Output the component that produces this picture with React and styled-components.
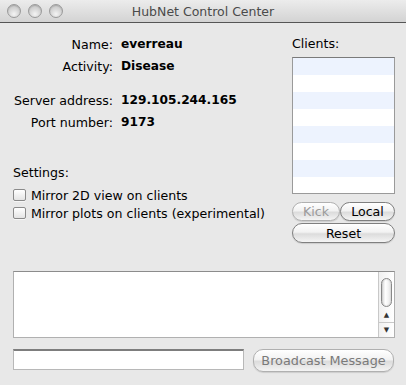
import React from "react";
import styled, { createGlobalStyle } from "styled-components";

const Global = createGlobalStyle`
  html, body { margin: 0; padding: 0; background: #e8e8e8; }
  body { font-family: "DejaVu Sans", "Liberation Sans", sans-serif; font-size: 12.6px; color: #000; }
  * { box-sizing: border-box; }
`;

const Window = styled.div`
  width: 406px;
  height: 385px;
  background: #e8e8e8;
  display: flex;
  flex-direction: column;
  overflow: hidden;
`;

const TitleBar = styled.div`
  height: 23px;
  flex: none;
  display: flex;
  align-items: center;
  position: relative;
  background: linear-gradient(#ececec, #d3d3d3);
  border-bottom: 1px solid #555;
`;

const Lights = styled.div`
  display: flex;
  gap: 7px;
  padding-left: 7px;
`;

const Light = styled.span`
  width: 14px;
  height: 14px;
  border-radius: 50%;
  border: 1px solid #9a9a9a;
  background: radial-gradient(circle at 50% 75%, #f4f4f4 0%, #d8d8d8 45%, #bdbdbd 100%);
  box-shadow: inset 0 1px 1px rgba(0,0,0,0.15);
`;

const Title = styled.div`
  position: absolute;
  left: 0;
  right: 0;
  text-align: center;
  font-size: 12.5px;
  color: #4a4a4a;
  pointer-events: none;
`;

const Body = styled.div`
  padding: 10px 12px 0 13px;
  display: flex;
  flex-direction: column;
`;

const Top = styled.div`
  display: flex;
  justify-content: space-between;
`;

const LeftCol = styled.div`
  display: flex;
  flex-direction: column;
`;

const InfoGrid = styled.div`
  display: grid;
  grid-template-columns: 100px auto;
  grid-template-rows: 22px 22px 12px 22px 22px;
  column-gap: 8px;
  align-items: center;
`;

const Label = styled.div`
  text-align: right;
  white-space: nowrap;
`;

const Value = styled.div`
  font-weight: bold;
  font-size: 12.2px;
  white-space: nowrap;
`;

const Spacer = styled.div`
  grid-column: 1 / 3;
`;

const SectionLabel = styled.div`
  line-height: 18px;
  margin-top: ${p => p.$mt || 0}px;
`;

const CheckList = styled.div`
  margin-top: 4px;
  display: flex;
  flex-direction: column;
`;

const CheckRow = styled.label`
  display: flex;
  align-items: center;
  height: 18px;
  gap: 5px;
  white-space: nowrap;
`;

const Box = styled.span`
  width: 13px;
  height: 12px;
  border: 1px solid #8a8a8a;
  border-radius: 2px;
  background: linear-gradient(#ffffff, #e4e4e4);
  box-shadow: 0 1px 0 rgba(255,255,255,0.6);
`;

const RightCol = styled.div`
  width: 103px;
  display: flex;
  flex-direction: column;
  margin-right: -1px;
`;

const ClientsLabel = styled.div`
  line-height: 22px;
`;

const List = styled.div`
  margin-top: 2px;
  height: 137px;
  border: 1px solid #9a9a9a;
  border-top-color: #7a7a7a;
  display: flex;
  flex-direction: column;
  overflow: hidden;
`;

const Stripe = styled.div`
  height: 17px;
  flex: none;
  background: ${p => (p.$alt ? "#ffffff" : "#edf3fe")};
`;

const ButtonRow = styled.div`
  display: flex;
  margin-top: 8px;
`;

const Pill = styled.button`
  font-family: inherit;
  font-size: ${p => p.$fs || 12.6}px;
  height: ${p => p.$h || 19}px;
  width: ${p => (p.$w ? p.$w + "px" : "100%")};
  margin-top: ${p => p.$mt || 0}px;
  padding: 0;
  border-radius: 10px;
  border: 1px solid ${p => (p.disabled ? "#b0b0b0" : "#7f7f7f")};
  color: ${p => (p.disabled ? (p.$dim || "#9a9a9a") : "#000")};
  background: linear-gradient(#ffffff 0%, #f2f2f2 45%, #dcdcdc 55%, #f4f4f4 100%);
  box-shadow: 0 1px 1px rgba(0,0,0,0.12);
  display: flex;
  align-items: center;
  justify-content: center;
  flex: none;
`;

const Messages = styled.div`
  margin-top: 28px;
  height: 67px;
  border: 1px solid #b0b0b0;
  border-top-color: #8c8c8c;
  background: #fff;
  display: flex;
  justify-content: flex-end;
  margin-right: -1px;
`;

const Scrollbar = styled.div`
  width: 16px;
  border-left: 1px solid #c8c8c8;
  background: linear-gradient(90deg, #f0f0f0, #ffffff);
  display: flex;
  flex-direction: column;
  align-items: center;
  padding-top: 6px;
`;

const Thumb = styled.div`
  width: 11px;
  height: 29px;
  border-radius: 6px;
  border: 1px solid #888;
  background: linear-gradient(90deg, #d8d8d8, #ffffff 40%, #e6e6e6);
  box-shadow: inset 0 0 2px rgba(0,0,0,0.2);
`;

const Arrow = styled.div`
  width: 100%;
  height: ${p => p.$h}px;
  display: flex;
  align-items: center;
  justify-content: center;
  font-size: 7px;
  color: #333;
  border-top: ${p => (p.$line ? "1px solid #c8c8c8" : "none")};
  margin-top: ${p => p.$mt || 0}px;
`;

const Bottom = styled.div`
  margin-top: 11px;
  display: flex;
  justify-content: space-between;
  align-items: flex-start;
`;

const Input = styled.div`
  width: 231px;
  height: 21px;
  background: #fff;
  border: 1px solid #b8b8b8;
  border-top: 2px solid #7d7d7d;
`;

export default function App() {
  const stripes = Array.from({ length: 8 }, (_, i) => i % 2 === 1);
  return (
    <Window>
      <Global />
      <TitleBar>
        <Lights>
          <Light />
          <Light />
          <Light />
        </Lights>
        <Title>HubNet Control Center</Title>
      </TitleBar>
      <Body>
        <Top>
          <LeftCol>
            <InfoGrid>
              <Label>Name:</Label>
              <Value>everreau</Value>
              <Label>Activity:</Label>
              <Value>Disease</Value>
              <Spacer />
              <Label>Server address:</Label>
              <Value>129.105.244.165</Value>
              <Label>Port number:</Label>
              <Value>9173</Value>
            </InfoGrid>
            <SectionLabel $mt={31}>Settings:</SectionLabel>
            <CheckList>
              <CheckRow>
                <Box />
                Mirror 2D view on clients
              </CheckRow>
              <CheckRow>
                <Box />
                Mirror plots on clients (experimental)
              </CheckRow>
            </CheckList>
          </LeftCol>
          <RightCol>
            <ClientsLabel>Clients:</ClientsLabel>
            <List>
              {stripes.map((alt, i) => (
                <Stripe key={i} $alt={alt} />
              ))}
            </List>
            <ButtonRow>
              <Pill disabled $w={48}>Kick</Pill>
              <Pill $w={55}>Local</Pill>
            </ButtonRow>
            <Pill $h={20} $mt={2}>Reset</Pill>
          </RightCol>
        </Top>
        <Messages>
          <Scrollbar>
            <Thumb />
            <Arrow $h={14} $mt={1}>▲</Arrow>
            <Arrow $h={14} $line>▼</Arrow>
          </Scrollbar>
        </Messages>
        <Bottom>
          <Input />
          <Pill disabled $w={141} $h={23} $fs={12.8} $dim="#7a7a7a">Broadcast Message</Pill>
        </Bottom>
      </Body>
    </Window>
  );
}
